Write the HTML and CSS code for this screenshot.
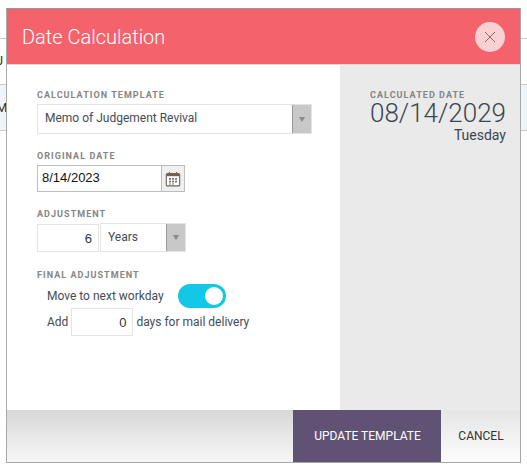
FILE: index.html
```html
<!DOCTYPE html>
<html lang="en">
<head>
<meta charset="utf-8">
<title>Date Calculation</title>
<link rel="stylesheet" href="styles.css">
</head>
<body>
<div class="backdrop">
  <div class="bg-row bg-row-plain"><span class="bg-cell">J</span></div>
  <div class="bg-row bg-row-shaded"><span class="bg-cell">M</span></div>
</div>
<div class="modal">
  <header class="modal-head">
    <h1 class="modal-title">Date Calculation</h1>
    <button class="close-btn" aria-label="Close">
      <svg width="14" height="14" viewBox="0 0 14 14"><path d="M2 2l10 10M12 2L2 12" stroke="#8a6a6c" stroke-width="1" fill="none"/></svg>
    </button>
  </header>
  <div class="modal-body">
    <div class="form-col">
      <div class="field field-template">
        <div class="label">CALCULATION TEMPLATE</div>
        <div class="select select-wide">
          <span class="select-text">Memo of Judgement Revival</span>
          <span class="select-arrow"><i class="tri"></i></span>
        </div>
      </div>
      <div class="field field-date">
        <div class="label">ORIGINAL DATE</div>
        <div class="date-group">
          <span class="date-text">8/14/2023</span>
          <span class="date-btn">
            <svg width="16" height="16" viewBox="0 0 16 16"><path d="M2.5 2.5h11a1.2 1.2 0 0 1 1.2 1.2v10a1.2 1.2 0 0 1-1.2 1.2h-11a1.2 1.2 0 0 1-1.2-1.2v-10a1.2 1.2 0 0 1 1.2-1.2z" fill="#fff" stroke="#6b635c" stroke-width="1.1"/><path d="M1.5 3h13v2.2h-13z" fill="#6b635c"/><path d="M4.5 1v3M11.5 1v3" stroke="#6b635c" stroke-width="1.1"/><path d="M4 7h2v1.7H4zM7 7h2v1.7H7zM10 7h2v1.7h-2zM4 9.8h2v1.7H4zM7 9.8h2v1.7H7zM10 9.8h2v1.7h-2zM4 12.4h2v1.1H4zM7 12.4h2v1.1H7z" fill="#7a726b"/></svg>
          </span>
        </div>
      </div>
      <div class="field field-adjust">
        <div class="label">ADJUSTMENT</div>
        <div class="adjust-row">
          <span class="num-box num-adjust">6</span>
          <div class="select select-unit">
            <span class="select-text">Years</span>
            <span class="select-arrow"><i class="tri"></i></span>
          </div>
        </div>
      </div>
      <div class="field field-final">
        <div class="label">FINAL ADJUSTMENT</div>
        <div class="final-row">
          <span class="plain">Move to next workday</span>
          <span class="toggle"><i class="knob"></i></span>
        </div>
        <div class="mail-row">
          <span class="plain">Add</span>
          <span class="num-box num-mail">0</span>
          <span class="plain">days for mail delivery</span>
        </div>
      </div>
    </div>
    <aside class="result-col">
      <div class="label">CALCULATED DATE</div>
      <div class="result-date">08/14/2029</div>
      <div class="result-day">Tuesday</div>
    </aside>
  </div>
  <footer class="modal-foot">
    <button class="btn btn-update">UPDATE TEMPLATE</button>
    <button class="btn btn-cancel">CANCEL</button>
  </footer>
</div>
</body>
</html>
```
FILE: styles.css
```css
* { box-sizing: border-box; }
html, body { margin: 0; padding: 0; }
body {
  width: 527px;
  height: 470px;
  overflow: hidden;
  position: relative;
  background: #fff;
  font-family: Roboto, "Liberation Sans", sans-serif;
  color: #444c56;
}
.backdrop { padding-top: 38px; }
.bg-row { height: 46px; border-top: 1px solid #c8c8c8; font-size: 13px; color: #333; }
.bg-row-shaded { background: #f0f4f8; border-bottom: 1px solid #c8c8c8; height: 47px; }
.bg-cell { display: block; line-height: 44px; margin-left: -4px; }
.bg-row-shaded .bg-cell { line-height: 46px; }
.modal {
  position: absolute;
  left: 6px;
  top: 8px;
  width: 515px;
  height: 455px;
  border: 1px solid #a8a8a8;
  border-top-color: #999;
  background: #fff;
  display: flex;
  flex-direction: column;
}
.modal-head {
  height: 56px;
  flex: none;
  background: #f4626b;
  border-bottom: 1px solid #d9d9d9;
  display: flex;
  align-items: center;
  justify-content: space-between;
  padding: 0 15px;
}
.modal-title { margin: 0; font-size: 20px; font-weight: 300; color: #fff; }
.close-btn {
  width: 30px;
  height: 30px;
  border: 0;
  padding: 0;
  border-radius: 50%;
  background: #fbd0d3;
  display: flex;
  align-items: center;
  justify-content: center;
}
.modal-body { flex: 1; display: flex; min-height: 0; }
.form-col { width: 333px; flex: none; padding: 25px 0 0 30px; }
.result-col { flex: 1; min-width: 0; background: #eaeaea; padding: 25px 14px 0 30px; }
.label {
  font-size: 9px;
  font-weight: 700;
  letter-spacing: 1.05px;
  line-height: 10px;
  color: #858585;
  white-space: nowrap;
}
.field-template .label { margin-bottom: 4px; }
.select { display: flex; border: 1px solid #e4e4e4; background: #fff; font-size: 12px; }
.select-wide { width: 275px; height: 30px; }
.select-unit { width: 86px; height: 29px; margin-left: 1px; }
.select-text { flex: 1; padding-left: 7px; line-height: 26px; color: #444c56; }
.select-arrow { width: 19px; flex: none; background: #c8c8c8; border-left: 1px solid #999; display: flex; align-items: center; justify-content: center; }
.tri { width: 0; height: 0; border: 3.5px solid transparent; border-top: 5px solid #888; border-bottom: 0; }
.field-date { margin-top: 17px; }
.field-date .label { margin-bottom: 4px; }
.date-group { width: 148px; height: 27px; border: 1px solid #bdbdbd; display: flex; }
.date-text { flex: 1; font-family: "Liberation Sans", sans-serif; font-size: 13px; line-height: 23px; padding-left: 4px; color: #111; }
.date-btn { width: 23px; flex: none; background: #efefef; border-left: 1px solid #bdbdbd; display: flex; align-items: center; justify-content: center; }
.field-adjust { margin-top: 17px; }
.field-adjust .label { margin-bottom: 4px; }
.adjust-row { display: flex; align-items: flex-end; }
.num-box {
  display: block;
  border: 1px solid #e4e4e4;
  background: #fff;
  text-align: right;
  font-family: "Liberation Sans", sans-serif;
  font-size: 13px;
  color: #333;
  padding-right: 6px;
}
.num-adjust { width: 62px; height: 28px; line-height: 27px; }
.num-mail { width: 62px; height: 28px; line-height: 27px; margin: 0 3px 0 3px; }
.field-final { margin-top: 18px; }
.field-final .label { margin-bottom: 4px; }
.plain { font-size: 12px; color: #444c56; white-space: nowrap; }
.final-row { display: flex; align-items: center; gap: 14px; padding-left: 10px; height: 24px; }
.toggle { width: 48px; height: 24px; border-radius: 12px; background: #12c8e6; display: flex; align-items: center; justify-content: flex-end; padding-right: 3px; }
.knob { width: 18px; height: 18px; border-radius: 50%; background: #fff; }
.mail-row { display: flex; align-items: center; padding-left: 10px; height: 28px; }
.modal-foot {
  height: 52px;
  flex: none;
  display: flex;
  justify-content: flex-end;
  background: linear-gradient(#d8d8d8, #f6f6f6);
}
.btn { border: 0; padding: 0 0 0 1px; font-family: Roboto, "Liberation Sans", sans-serif; font-size: 12px; height: 100%; }
.btn-update { width: 148px; background: #5f5275; color: #fff; }
.btn-cancel { width: 79px; background: linear-gradient(#e6e6e6, #fcfcfc); color: #333; }
.result-date { font-size: 26px; font-weight: 300; line-height: 26px; color: #3c4650; white-space: nowrap; }
.result-day { font-size: 14px; line-height: 16px; margin-top: 1px; text-align: right; color: #3c4650; }
```
